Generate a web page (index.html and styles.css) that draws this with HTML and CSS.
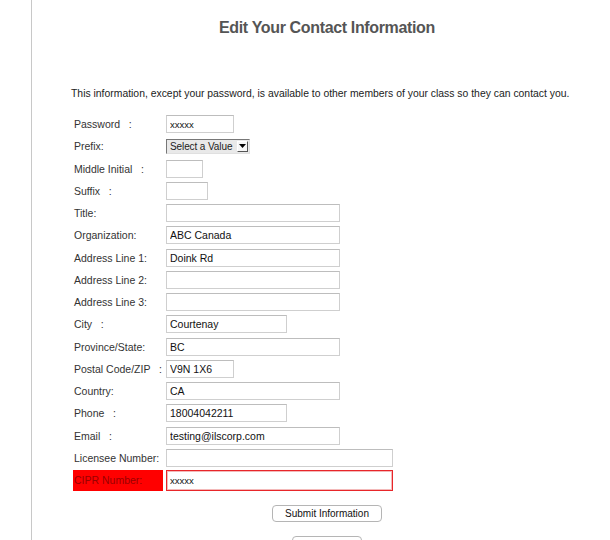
FILE: index.html
```html
<!DOCTYPE html>
<html>
<head>
<meta charset="utf-8">
<link rel="stylesheet" href="styles.css">
</head>
<body>
<div class="page">
  <h1 class="title">Edit Your Contact Information</h1>
  <p class="intro">This information, except your password, is available to other members of your class so they can contact you.</p>
  <div class="form">
    <label class="lbl">Password   :</label><div class="cell"><input class="inp w68 small" value="xxxxx"></div>
    <label class="lbl">Prefix:</label><div class="cell"><span class="sel"><select class="select"><option>Select a Value</option></select><span class="arrow"><svg width="7" height="4" viewBox="0 0 7 4"><path d="M0 0H7L3.5 4Z" fill="#000"/></svg></span></span></div>
    <label class="lbl">Middle Initial   :</label><div class="cell"><input class="inp w37"></div>
    <label class="lbl">Suffix   :</label><div class="cell"><input class="inp w42"></div>
    <label class="lbl">Title:</label><div class="cell"><input class="inp w174"></div>
    <label class="lbl">Organization:</label><div class="cell"><input class="inp w174" value="ABC Canada"></div>
    <label class="lbl">Address Line 1:</label><div class="cell"><input class="inp w174" value="Doink Rd"></div>
    <label class="lbl">Address Line 2:</label><div class="cell"><input class="inp w174"></div>
    <label class="lbl">Address Line 3:</label><div class="cell"><input class="inp w174"></div>
    <label class="lbl">City   :</label><div class="cell"><input class="inp w121" value="Courtenay"></div>
    <label class="lbl">Province/State:</label><div class="cell"><input class="inp w174" value="BC"></div>
    <label class="lbl">Postal Code/ZIP   :</label><div class="cell"><input class="inp w68" value="V9N 1X6"></div>
    <label class="lbl">Country:</label><div class="cell"><input class="inp w174" value="CA"></div>
    <label class="lbl">Phone   :</label><div class="cell"><input class="inp w121" value="18004042211"></div>
    <label class="lbl">Email   :</label><div class="cell"><input class="inp w174" value="testing@ilscorp.com"></div>
    <label class="lbl">Licensee Number:</label><div class="cell"><input class="inp w227"></div>
    <label class="lbl error">CIPR Number:</label><div class="cell"><input class="inp w227 small errinp" value="xxxxx"></div>
  </div>
  <div class="actions">
    <button class="btn">Submit Information</button>
    <button class="btn btn2">&nbsp;</button>
  </div>
</div>
</body>
</html>
```
FILE: styles.css
```css
html, body {
  margin: 0;
  padding: 0;
  background: #fff;
}
body {
  font-family: "Liberation Sans", Arial, Helvetica, sans-serif;
  color: #333;
  overflow: hidden;
}
.page {
  margin-left: 31px;
  border-left: 1px solid #c8c8c8;
  min-height: 540px;
  width: 578px;
}
.title {
  margin: 0;
  padding-top: 18px;
  padding-left: 12px;
  text-align: center;
  font-size: 16px;
  font-weight: bold;
  color: #555;
  letter-spacing: -0.35px;
  line-height: 20px;
}
.intro {
  margin: 0;
  padding-top: 49px;
  padding-left: 39px;
  font-size: 10.4px;
  line-height: 14px;
  color: #222;
  white-space: nowrap;
}
.form {
  display: grid;
  grid-template-columns: 90px auto;
  column-gap: 3px;
  grid-auto-rows: 18px;
  row-gap: 4.25px;
  margin-top: 14px;
  margin-left: 41px;
  align-items: center;
}
.lbl {
  font-size: 10.5px;
  white-space: pre;
  padding-left: 1px;
  color: #333;
  height: 100%;
  display: flex;
  align-items: center;
}
.cell {
  display: flex;
  align-items: center;
  height: 100%;
}
.inp {
  box-sizing: border-box;
  height: 18px;
  border: 1px solid #cfcfcf;
  border-top-color: #bdbdbd;
  background: #fff;
  padding: 0 3px;
  font-family: "Liberation Sans", Arial, sans-serif;
  font-size: 10.5px;
  color: #111;
  outline: none;
  margin: 0;
}
.small { font-size: 9.5px; }
.w37 { width: 37px; }
.w42 { width: 42px; }
.w68 { width: 68px; }
.w121 { width: 121px; }
.w174 { width: 174px; }
.w227 { width: 227px; }
.sel {
  position: relative;
  display: inline-block;
  width: 84px;
  height: 15px;
}
.select {
  -webkit-appearance: none;
  appearance: none;
  box-sizing: border-box;
  width: 84px;
  height: 15px;
  margin: 0;
  padding: 0 12px 0 3px;
  font-family: "Liberation Sans", Arial, sans-serif;
  font-size: 10px;
  letter-spacing: -0.1px;
  color: #222;
  background: #e9e9e9;
  border: 1px solid;
  border-color: #777 #e0e0e0 #e0e0e0 #777;
  border-radius: 0;
  outline: none;
  line-height: 13px;
  display: block;
}
.arrow {
  position: absolute;
  right: 2px;
  top: 2px;
  width: 11px;
  height: 11px;
  box-sizing: border-box;
  background: #f6f6f6;
  border: 1px solid;
  border-color: #fff #555 #555 #fff;
  display: flex;
  align-items: center;
  justify-content: center;
}
.error {
  background: #ff0000;
  color: #9a0000;
  height: 21px;
}
.errinp {
  height: 21px;
  border: 1px solid #e8262a;
  box-shadow: inset 0 0 0 1px #f3b9b9;
}
.form .error + .cell { height: 21px; }
.actions {
  display: flex;
  flex-direction: column;
  align-items: center;
  padding-left: 12px;
  margin-top: 16px;
  gap: 14px;
}
.btn {
  width: 110px;
  height: 17px;
  box-sizing: border-box;
  border: 1px solid #b5b5b5;
  border-radius: 4px;
  background: #fff;
  font-family: "Liberation Sans", Arial, sans-serif;
  font-size: 10px;
  color: #111;
  padding: 0;
  line-height: 15px;
}
.btn2 {
  width: 70px;
}
```
